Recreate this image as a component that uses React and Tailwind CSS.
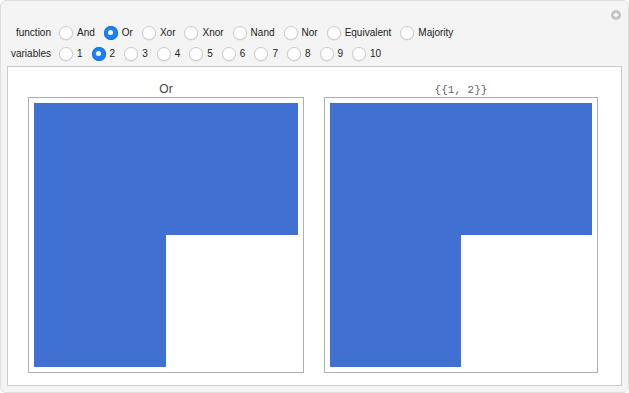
import React, { useState } from "react";

const FUNCS = ["And", "Or", "Xor", "Xnor", "Nand", "Nor", "Equivalent", "Majority"];
const VARS = ["1", "2", "3", "4", "5", "6", "7", "8", "9", "10"];

function Radio({ checked }) {
  return checked ? (
    <span className="flex items-center justify-center w-[14px] h-[14px] rounded-full bg-[#1b82fb] shadow-[inset_0_0_0_1px_#1473e6]">
      <span className="w-[5px] h-[5px] rounded-full bg-white" />
    </span>
  ) : (
    <span className="block w-[14px] h-[14px] rounded-full bg-white border border-[#cdcdcd] shadow-[0_0.5px_1px_rgba(0,0,0,0.12)]" />
  );
}

function Row({ label, items, value, onChange }) {
  return (
    <div className="flex items-center h-[21px] pl-[8px]">
      <span className="w-[42px] text-right mr-[8px]">{label}</span>
      <div className="flex items-center gap-[9px]">
        {items.map((it) => (
          <button
            key={it}
            onClick={() => onChange(it)}
            className="flex items-center gap-[4px] cursor-pointer"
          >
            <Radio checked={value === it} />
            <span>{it}</span>
          </button>
        ))}
      </div>
    </div>
  );
}

function Plot({ w }) {
  return (
    <div className="border border-[#b0b0b0] bg-white p-[5px]">
      <div className="grid grid-cols-2 grid-rows-2" style={{ width: w, height: 264 }}>
        <div className="bg-[#3f70d2]" />
        <div className="bg-[#3f70d2]" />
        <div className="bg-[#3f70d2]" />
        <div className="bg-white" />
      </div>
    </div>
  );
}

export default function App() {
  const [fn, setFn] = useState("Or");
  const [nv, setNv] = useState("2");

  return (
    <div className="relative w-[629px] h-[393px] bg-[#f4f4f4] border border-[#dedede] rounded-[6px] text-[10px] text-[#222] font-['Liberation_Sans',Arial,sans-serif]">
      <span className="absolute right-[7px] top-[9px] flex items-center justify-center w-[10px] h-[10px] rounded-full bg-[#c4c4c4]">
        <svg width="6" height="6" viewBox="0 0 6 6">
          <path d="M3 0.5v5M0.5 3h5" stroke="white" strokeWidth="1.4" />
        </svg>
      </span>

      <div className="pt-[21px]">
        <Row label="function" items={FUNCS} value={fn} onChange={setFn} />
        <Row label="variables" items={VARS} value={nv} onChange={setNv} />
      </div>

      <div className="mx-[6px] mt-[2px] h-[320px] bg-white border border-[#cccccc] flex gap-[20px] pl-[20px] pt-[14px]">
        <div className="flex flex-col items-center">
          <div className="h-[16px] text-[12px] text-[#444] leading-[16px]">Or</div>
          <Plot w={264} />
        </div>
        <div className="flex flex-col items-center">
          <div className="h-[16px] text-[11px] text-[#666] leading-[18px] font-['Liberation_Mono','DejaVu_Sans_Mono',monospace]">
            {"{{1, 2}}"}
          </div>
          <Plot w={262} />
        </div>
      </div>
    </div>
  );
}
